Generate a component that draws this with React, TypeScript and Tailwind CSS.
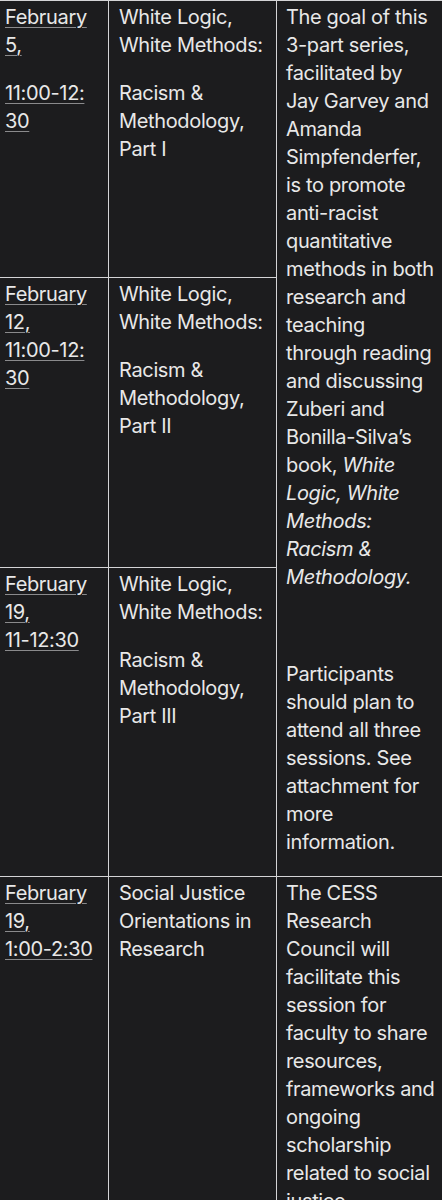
import React from "react";

const L = ({ children, u = false, cls = "" }: { children: React.ReactNode; u?: boolean; cls?: string }) => (
  <span className={`block whitespace-nowrap ${cls}`}>
    {u ? (
      <span className="underline decoration-[#8a8a8c] decoration-1 underline-offset-[3px]">{children}</span>
    ) : (
      children
    )}
  </span>
);

const cell = "bg-[#1c1c1e] text-[#e8e8e8] pt-[2px] overflow-hidden";

export default function App() {
  return (
    <div className="min-h-[1200px] bg-[#1c1c1e] font-['Inter','Noto_Sans',sans-serif] text-[20px] leading-[28px] tracking-[-0.35px]">
      <div className="grid grid-cols-[108px_167px_165px] grid-rows-[276px_289px_308px_auto] gap-px bg-[#d4d4d6] pt-px">
        {/* Row 1 */}
        <div className={`${cell} pl-[5px]`}>
          <L u>February</L>
          <L u>5,</L>
          <L u cls="mt-[20px]">11:00-12:</L>
          <L u>30</L>
        </div>
        <div className={`${cell} pl-[10px]`}>
          <L>White Logic,</L>
          <L>White Methods:</L>
          <L cls="mt-[20px]">Racism &amp;</L>
          <L>Methodology,</L>
          <L>Part I</L>
        </div>
        <div className={`${cell} pl-[9px] row-span-3`}>
          <L>The goal of this</L>
          <L>3-part series,</L>
          <L>facilitated by</L>
          <L>Jay Garvey and</L>
          <L>Amanda</L>
          <L>Simpfenderfer,</L>
          <L>is to promote</L>
          <L>anti-racist</L>
          <L>quantitative</L>
          <L>methods in both</L>
          <L>research and</L>
          <L>teaching</L>
          <L>through reading</L>
          <L>and discussing</L>
          <L>Zuberi and</L>
          <L>Bonilla-Silva’s</L>
          <L>
            book, <em>White</em>
          </L>
          <L cls="italic">Logic, White</L>
          <L cls="italic">Methods:</L>
          <L cls="italic">Racism &amp;</L>
          <L cls="italic">Methodology.</L>
          <L cls="mt-[69px]">Participants</L>
          <L>should plan to</L>
          <L>attend all three</L>
          <L>sessions. See</L>
          <L>attachment for</L>
          <L>more</L>
          <L>information.</L>
        </div>

        {/* Row 2 */}
        <div className={`${cell} pl-[5px]`}>
          <L u>February</L>
          <L u>12,</L>
          <L u>11:00-12:</L>
          <L u>30</L>
        </div>
        <div className={`${cell} pl-[10px]`}>
          <L>White Logic,</L>
          <L>White Methods:</L>
          <L cls="mt-[20px]">Racism &amp;</L>
          <L>Methodology,</L>
          <L>Part II</L>
        </div>

        {/* Row 3 */}
        <div className={`${cell} pl-[5px]`}>
          <L u>February</L>
          <L u>19,</L>
          <L u>11-12:30</L>
        </div>
        <div className={`${cell} pl-[10px]`}>
          <L>White Logic,</L>
          <L>White Methods:</L>
          <L cls="mt-[20px]">Racism &amp;</L>
          <L>Methodology,</L>
          <L>Part III</L>
        </div>

        {/* Row 4 */}
        <div className={`${cell} pl-[5px] pb-[40px]`}>
          <L u>February</L>
          <L u>19,</L>
          <L u>1:00-2:30</L>
        </div>
        <div className={`${cell} pl-[10px]`}>
          <L>Social Justice</L>
          <L>Orientations in</L>
          <L>Research</L>
        </div>
        <div className={`${cell} pl-[9px] pb-[40px]`}>
          <L>The CESS</L>
          <L>Research</L>
          <L>Council will</L>
          <L>facilitate this</L>
          <L>session for</L>
          <L>faculty to share</L>
          <L>resources,</L>
          <L>frameworks and</L>
          <L>ongoing</L>
          <L>scholarship</L>
          <L>related to social</L>
          <L>justice.</L>
        </div>
      </div>
    </div>
  );
}
